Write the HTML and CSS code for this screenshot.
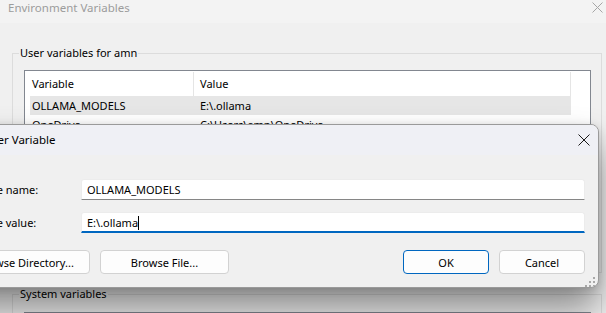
FILE: index.html
```html
<!DOCTYPE html>
<html lang="en">
<head>
    <meta charset="UTF-8">
    <meta name="viewport" content="width=device-width, initial-scale=1.0">
    <title>Edit User Variable</title>
    <link rel="stylesheet" href="styles.css">
</head>
<body>
    <!-- Janela de fundo: Environment Variables (inativa) -->
    <div class="env">
        <div class="env-title">
            <span class="env-caption">Environment Variables</span>
            <svg class="env-close" width="11" height="11" viewBox="0 0 11 11">
                <path d="M0.5 0.5 L10.5 10.5 M10.5 0.5 L0.5 10.5" stroke="#a6a6a6" stroke-width="1" fill="none"/>
            </svg>
        </div>
        <div class="env-body">
            <fieldset class="group user-group">
                <legend>User variables for amn</legend>
                <div class="list user-list">
                    <div class="list-head">
                        <div class="col col-var">Variable</div>
                        <div class="col col-val">Value</div>
                    </div>
                    <div class="row selected">
                        <div class="col col-var">OLLAMA_MODELS</div>
                        <div class="col col-val">E:\.ollama</div>
                    </div>
                    <div class="row">
                        <div class="col col-var">OneDrive</div>
                        <div class="col col-val">C:\Users\amn\OneDrive</div>
                    </div>
                    <div class="row">
                        <div class="col col-var">Path</div>
                        <div class="col col-val">C:\Users\amn\AppData\Local\Microsoft\WindowsApps;</div>
                    </div>
                </div>
            </fieldset>
            <fieldset class="group sys-group">
                <legend>System variables</legend>
                <div class="list sys-list"></div>
            </fieldset>
        </div>
    </div>

    <!-- Dialogo em primeiro plano: Edit User Variable -->
    <div class="dialog">
        <div class="dlg-title">
            <span class="dlg-caption">Edit User Variable</span>
            <svg class="dlg-close" width="12" height="12" viewBox="0 0 12 12">
                <path d="M0.5 0.5 L11.5 11.5 M11.5 0.5 L0.5 11.5" stroke="#1a1a1a" stroke-width="1" fill="none"/>
            </svg>
        </div>
        <div class="dlg-body">
            <div class="field">
                <label class="field-label">Variable name:</label>
                <div class="field-input">OLLAMA_MODELS</div>
            </div>
            <div class="field">
                <label class="field-label">Variable value:</label>
                <div class="field-input focused">E:\.ollama<span class="caret"></span></div>
            </div>
            <div class="actions">
                <button class="btn btn-wide">Browse Directory...</button>
                <button class="btn btn-wide">Browse File...</button>
                <span class="spacer"></span>
                <button class="btn btn-ok">OK</button>
                <button class="btn">Cancel</button>
            </div>
            <svg class="grip" width="10" height="10" viewBox="0 0 10 10">
                <rect x="8" y="0" width="2" height="2" fill="#a8a8a8"/>
                <rect x="4" y="4" width="2" height="2" fill="#a8a8a8"/>
                <rect x="8" y="4" width="2" height="2" fill="#a8a8a8"/>
                <rect x="0" y="8" width="2" height="2" fill="#a8a8a8"/>
                <rect x="4" y="8" width="2" height="2" fill="#a8a8a8"/>
                <rect x="8" y="8" width="2" height="2" fill="#a8a8a8"/>
            </svg>
        </div>
    </div>
</body>
</html>
```

FILE: styles.css
```css
/* Pagina inteira: area de trabalho */
html {
    overflow: hidden;
}

body {
    margin: 0;
    width: 606px;
    height: 313px;
    overflow: hidden;
    position: relative;
    background: #f0f0f0;
    font-family: "Noto Sans", "Open Sans", sans-serif;
    font-size: 11px;
    color: #000;
}

/* Janela de fundo */
.env {
    height: 100%;
    overflow: hidden;
}

.env-title {
    height: 23px;
    background: #f3f3f3;
    display: flex;
    align-items: center;
    justify-content: space-between;
    padding: 0 3px 0 8px;
}

.env-caption {
    color: #9c9c9c;
    font-size: 11.5px;
    margin-top: -8px;
}

.env-close {
    margin-top: -8px;
}

.env-body {
    padding: 22px 4px 0 12px;
}

/* Caixas de grupo */
.group {
    margin: 0;
    padding: 0 0 0 11px;
    border: 1px solid #dcdcdc;
    min-width: 0;
}

.group legend {
    margin-left: -5px;
    padding: 0 1px;
    line-height: 16px;
}

.user-group {
    height: 226px;
}

.sys-group {
    margin-top: 13px;
    height: 60px;
}

/* Lista de variaveis */
.list {
    width: 567px;
    box-sizing: border-box;
    border: 1px solid #828790;
    background: #fff;
}

.user-list {
    margin-top: 9px;
    height: 190px;
}

.sys-list {
    margin-top: 10px;
    height: 40px;
}

.list-head {
    display: flex;
    height: 25px;
    width: 546px;
    align-items: center;
}

.list-head .col-var {
    padding-left: 7px;
    border-right: 1px solid #e5e5e5;
}

.list-head .col-val {
    padding-left: 6px;
    border-right: 1px solid #e5e5e5;
}

.list-head .col {
    height: 24px;
    line-height: 24px;
}

.col {
    box-sizing: border-box;
    white-space: nowrap;
    overflow: hidden;
}

.col-var {
    width: 169px;
}

.col-val {
    flex: 1;
}

.row {
    display: flex;
    height: 19px;
    line-height: 19px;
    margin-left: 5px;
    width: 541px;
}

.row .col-var {
    width: 164px;
    padding-left: 2px;
}

.row .col-val {
    padding-left: 6px;
}

.row.selected {
    background: #e6e6e6;
}

/* Dialogo flutuante (janela sobre a outra) */
.dialog {
    position: absolute;
    left: -52px;
    top: 124px;
    width: 651px;
    height: 164px;
    box-sizing: border-box;
    border: 1px solid #9a9a9a;
    border-radius: 8px;
    background: #f0f0f0;
    box-shadow: 0 22px 36px rgba(0, 0, 0, 0.42), 0 2px 8px rgba(0, 0, 0, 0.14);
    overflow: hidden;
}

.dlg-title {
    height: 30px;
    background: #eff0f5;
    display: flex;
    align-items: center;
    justify-content: space-between;
    padding: 0 8px 0 11px;
}

.dlg-caption {
    font-size: 11.5px;
    margin-top: -1px;
}

.dlg-close {
    margin-top: -1px;
}

.dlg-body {
    position: relative;
    padding: 24px 13px 0 12px;
}

/* Campos de texto */
.field {
    display: grid;
    grid-template-columns: 120px 1fr;
    align-items: center;
    margin-bottom: 12px;
}

.field-input {
    height: 21px;
    line-height: 20px;
    box-sizing: border-box;
    background: #fff;
    border: 1px solid #ececec;
    border-bottom: 1px solid #868686;
    border-radius: 3px 3px 0 0;
    padding-left: 5px;
    white-space: nowrap;
}

.field-input.focused {
    border-bottom: 2px solid #0067c0;
    line-height: 19px;
}

.caret {
    display: inline-block;
    width: 1px;
    height: 14px;
    background: #000;
    vertical-align: -3px;
}

/* Botoes */
.actions {
    display: flex;
    gap: 10px;
    margin-top: 17px;
}

.spacer {
    flex: 1;
}

.btn {
    font-family: inherit;
    font-size: 11px;
    height: 24px;
    width: 86px;
    padding: 0;
    background: #fdfdfd;
    border: 1px solid #d2d2d2;
    border-radius: 4px;
    color: #000;
}

.btn-wide {
    width: 129px;
}

.btn-ok {
    border-color: #0067c0;
}

.grip {
    position: absolute;
    right: 3px;
    top: 122px;
}
```
